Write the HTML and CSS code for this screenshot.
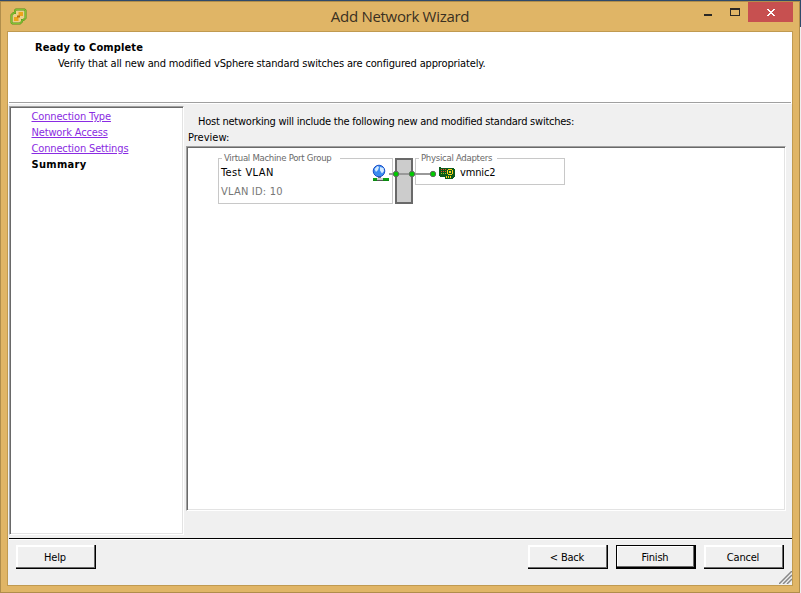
FILE: index.html
```html
<!DOCTYPE html>
<html>
<head>
  <meta charset="UTF-8">
  <title>Add Network Wizard</title>
  <link rel="stylesheet" href="styles.css">
</head>
<body>

  <div class="window">
    <div class="titlebar">
      <svg class="app-icon" width="17" height="17" viewBox="0 0 17 17">
        <path d="M6 1.500h8.500l1 1v7.500l-2 2h-1.500v1.500l-2 2H2.500l-1-1V7l2-2H5V2.500z" fill="#ecd08c" stroke="#548c1c" stroke-width="2"/>
        <path d="M6 1.500h8.500l1 1v7.500l-2 2h-1.500v1.500l-2 2H2.500l-1-1V7l2-2H5V2.500z" fill="none" stroke="#82c232" stroke-width="1.200"/>
        <path d="M8.500 4H13v4H8.500zM4 9h4.500v4H4z" fill="#eda41c"/>
        <path d="M7 7.500h3v2H7z" fill="#b86c0c"/>
      </svg>
      <h1>Add Network Wizard</h1>
      <div class="controls">
        <svg width="89" height="20" viewBox="0 0 89 20" shape-rendering="crispEdges">
          <path d="M44 0h45v20H44z" fill="#c75050"/>
          <path d="M0 12h8v2H0z" fill="#2b2824"/>
          <path d="M26 6h10v8H26zM27 8v5h8V8z" fill="#2b2824" fill-rule="evenodd"/>
          <path d="M63 7h2v1h1v1h2V8h1V7h2v1h-1v1h-1v1h-1v1h1v1h1v1h1v1h-2v-1h-1v-1h-2v1h-1v1h-2v-1h1v-1h1v-1h1v-1h-1V9h-1V8h-1z" fill="#fff"/>
        </svg>
      </div>
    </div>

    <div class="client">
      <div class="header">
        <h2>Ready to Complete</h2>
        <p>Verify that all new and modified vSphere standard switches are configured appropriately.</p>
      </div>

      <div class="main">
        <div class="steps">
          <a href="#">Connection Type</a>
          <a href="#">Network Access</a>
          <a href="#">Connection Settings</a>
          <b>Summary</b>
        </div>

        <div class="page">
          <p class="intro">Host networking will include the following new and modified standard switches:</p>
          <p class="label">Preview:</p>
          <div class="preview">
            <div class="group portgroup">
              <span class="legend">Virtual Machine Port Group</span>
              <div class="name">Test VLAN</div>
              <div class="vlan">VLAN ID: 10</div>
            </div>
            <div class="vswitch"></div>
            <div class="group adapters">
              <span class="legend">Physical Adapters</span>
              <div class="name">vmnic2</div>
            </div>

            <svg class="wires" width="100" height="24" viewBox="370 162 100 24">
              <path d="M389 174h44" stroke="#999" stroke-width="2"/>
              <g fill="#0c0" stroke="#5c6b5c">
                <circle cx="396" cy="174" r="2.700"/>
                <circle cx="412" cy="174" r="2.700"/>
                <circle cx="433" cy="174" r="2.700"/>
              </g>
              <!-- network globe -->
              <path d="M378 176h3v3h-3z" fill="#777"/>
              <path d="M373 178h16v3h-16z" fill="#0a8a10"/>
              <path d="M373 178.500h16v1h-16z" fill="#12b81a"/>
              <path d="M377 178h6v2h-6z" fill="#ccc"/>
              <path d="M377 180h6v1h-6z" fill="#555"/>
              <circle cx="379" cy="171" r="5.800" fill="#3b8cf0" stroke="#1c50c8"/>
              <path d="M374.500 169l3-3 1.500 1-1 3-2 2zM380 167l3.500 1 .5 3-2 2.500-2-3z" fill="#d4eaff"/>
              <!-- adapter card -->
              <g shape-rendering="crispEdges">
                <path d="M439 167h2v1h13v1h1v8h-1v1h-1v1h-8v-2h-5v-1h-1z" fill="#0c5a1a"/>
                <path d="M441 169h1v1h-1zM443 169h1v1h-1zM441 171h1v1h-1zM443 171h1v1h-1zM445 169h1v1h-1zM445 171h1v1h-1z" fill="#f04428"/>
                <path d="M441 173h1v1h-1zM443 173h1v1h-1zM445 173h1v1h-1z" fill="#a8c820"/>
                <path d="M448 169h4v1h-4zM447 170h1v4h-1zM452 170h1v4h-1zM448 174h4v1h-4zM449 171h2v2h-2zM446 176h1v2h-1zM448 176h1v2h-1zM450 176h1v2h-1z" fill="#ffd21c"/>
              </g>
            </svg>
          </div>
        </div>
      </div>

      <div class="footer">
        <button class="help">Help</button>
        <button>&lt; Back</button>
        <button class="default">Finish</button>
        <button>Cancel</button>
        <svg class="grip" width="13" height="13" viewBox="0 0 13 13">
          <path d="M0 13L13 0M4 13l9-9M8 13l5-5" stroke="#888" stroke-width="1.500"/>
        </svg>
      </div>
    </div>
  </div>

</body>
</html>
```

FILE: styles.css
```css
body {
  margin: 0;
  height: 593px;
  overflow: hidden;
  background: linear-gradient(#2f4a6b 27px, #f0f0f0 27px);
  font-family: "DejaVu Sans Condensed", "DejaVu Sans", sans-serif;
  font-stretch: condensed;
  font-size: 11px;
  line-height: 16px;
  color: #000;
}
*, *:before, *:after {
  box-sizing: border-box;
}
h1, h2, p {
  margin: 0;
}

.window {
  width: 800px;
  height: 592px;
  margin-top: 1px;
  border: 1px solid #b08d4b;
  background: #e0b566;
  padding: 0 6px 6px;
}
.titlebar {
  position: relative;
  height: 29px;
  text-align: center;
}
.app-icon {
  position: absolute;
  left: 3px;
  top: 6px;
}
h1 {
  font: 15px/29px "Open Sans", sans-serif;
  letter-spacing: -0.3px;
  color: #3a3022;
}
.controls {
  position: absolute;
  right: 0;
  top: 0;
  height: 20px;
}
.controls svg {
  display: block;
}

.client {
  height: 555px;
  border: 1px solid #c09a50;
  background: #f0f0f0;
  display: flex;
  flex-direction: column;
}
.header {
  height: 72px;
  padding: 8px 0 0 27px;
  background: #fff;
  position: relative;
}
.header:after {
  content: '';
  position: absolute;
  left: 1px;
  right: 1px;
  bottom: 1px;
  height: 1px;
  background: #a0a0a0;
}
h2 {
  font-size: 11px;
  line-height: 16px;
  letter-spacing: 0.12px;
}
.header p {
  padding-left: 23px;
  letter-spacing: -0.15px;
}

.main {
  display: flex;
  gap: 2px;
  padding: 2px 5px 0 1px;
  height: 434px;
}
.steps, .preview {
  border: 1px solid;
  border-color: #a0a0a0 #fff #fff #a0a0a0;
  background: #fff;
  box-shadow: inset 1px 1px #696969, inset -1px -1px #e3e3e3;
}
.steps {
  width: 175px;
  height: 429px;
  padding: 2px 0 0 21.5px;
  display: flex;
  flex-direction: column;
  align-items: flex-start;
  letter-spacing: -0.15px;
}
.steps a {
  color: #8a2be2;
}
.steps b {
  letter-spacing: 0.3px;
}
.page {
  width: 600px;
}
.intro {
  padding: 8px 0 0 12px;
  letter-spacing: -0.24px;
}
.label {
  padding-left: 2px;
}
.preview {
  position: relative;
  height: 365px;
  padding: 11px 0 0 31px;
  display: flex;
  align-items: flex-start;
}
.group {
  position: relative;
  border: 1px solid #c8c8c8;
  padding: 6px 2px 0;
}
.legend {
  position: absolute;
  left: 3px;
  top: -9px;
  padding-left: 2px;
  background: #fff;
  color: #696969;
  font-size: 9.5px;
  letter-spacing: -0.28px;
  white-space: nowrap;
}
.portgroup {
  width: 175px;
  height: 46px;
}
.portgroup .legend {
  width: 118px;
}
.portgroup .name {
  letter-spacing: 0.4px;
}
.vlan {
  margin-top: 3px;
  letter-spacing: 0.2px;
  color: #777;
}
.vswitch {
  width: 18px;
  height: 46px;
  margin: 0 2px;
  border: 2px solid #696969;
  background: #ccc;
}
.adapters {
  width: 150px;
  height: 27px;
}
.adapters .legend {
  width: 78px;
}
.adapters .name {
  padding-left: 42px;
  letter-spacing: -0.15px;
}
.wires {
  position: absolute;
  left: 183px;
  top: 15px;
}

.footer {
  position: relative;
  flex: 1;
  display: flex;
  gap: 8px;
  padding: 7px 8px 0 8px;
}
.footer:before {
  content: '';
  position: absolute;
  left: 1px;
  right: 0;
  top: 0;
  height: 2px;
  background: #000;
  border-bottom: 1px solid #fff;
}
button {
  width: 80px;
  height: 24px;
  padding: 2px 2px 0 0;
  border: 0;
  background: #f0f0f0;
  box-shadow: inset -1px -1px #000, inset -2px -2px #696969, inset 2px 2px #fff;
  font: inherit;
  letter-spacing: -0.2px;
  color: #000;
}
.help {
  margin-right: auto;
}
.default {
  box-shadow: inset 0 0 0 1px #000, inset -2px -2px #000, inset -3px -3px #696969, inset 2px 2px #fff;
}
.grip {
  position: absolute;
  right: 0;
  bottom: 1px;
}
```
